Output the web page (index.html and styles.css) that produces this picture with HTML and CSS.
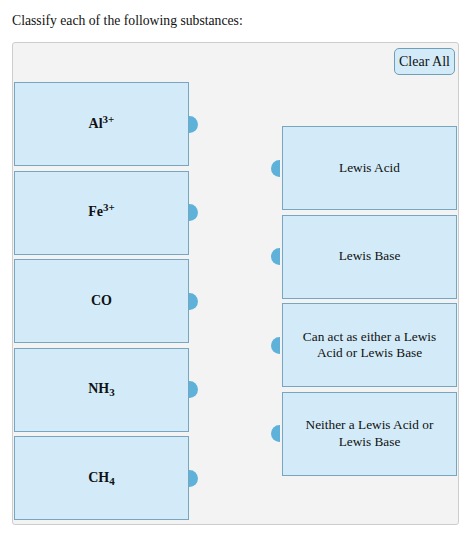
FILE: index.html
```html
<!DOCTYPE html>
<html>
<head>
<meta charset="utf-8">
<link rel="stylesheet" href="styles.css">
</head>
<body>
<p class="title">Classify each of the following substances:</p>
<div class="panel">
  <div class="toolbar"><button class="clear">Clear All</button></div>
  <div class="columns">
    <div class="col left">
      <div class="box src"><b>Al<sup>3+</sup></b></div>
      <div class="box src"><b>Fe<sup>3+</sup></b></div>
      <div class="box src"><b>CO</b></div>
      <div class="box src"><b>NH<sub>3</sub></b></div>
      <div class="box src"><b>CH<sub>4</sub></b></div>
    </div>
    <div class="col right">
      <div class="box dst">Lewis Acid</div>
      <div class="box dst">Lewis Base</div>
      <div class="box dst">Can act as either a Lewis Acid or Lewis Base</div>
      <div class="box dst">Neither a Lewis Acid or Lewis Base</div>
    </div>
  </div>
</div>
</body>
</html>
```
FILE: styles.css
```css
html, body {
  margin: 0;
  padding: 0;
  background: #ffffff;
  font-family: "Liberation Serif", "Times New Roman", serif;
  color: #111;
}
.title {
  margin: 0;
  padding: 12px 0 0 12px;
  font-size: 13.7px;
  line-height: 18px;
  height: 31px;
  box-sizing: border-box;
}
.panel {
  margin-left: 12px;
  width: 447px;
  height: 483px;
  box-sizing: border-box;
  border: 1px solid #cdcdcd;
  border-radius: 3px;
  background: #f3f3f3;
  margin-top: 11px;
}
.toolbar {
  display: flex;
  justify-content: flex-end;
  padding: 5px 3px 0 0;
}
.clear {
  font-family: "Liberation Serif", "Times New Roman", serif;
  font-size: 14px;
  color: #111;
  background: #d3ebf9;
  border: 1.5px solid #6f9fb7;
  border-radius: 5px;
  height: 27px;
  width: 61px;
  padding: 0;
  box-sizing: border-box;
}
.columns {
  display: flex;
  align-items: center;
  gap: 93px;
  padding: 7px 0 0 1px;
}
.col {
  display: flex;
  flex-direction: column;
  gap: 4.5px;
}
.box {
  position: relative;
  width: 175px;
  height: 84px;
  box-sizing: border-box;
  background: #d3ebf8;
  border: 1px solid #78a5bf;
  display: flex;
  align-items: center;
  justify-content: center;
  text-align: center;
  font-size: 13.3px;
  line-height: 16.7px;
  padding: 0 10px;
}
.src b {
  font-weight: bold;
  font-size: 14px;
}
.src sup, .src sub {
  font-size: 11px;
  line-height: 0;
}
.src sup {
  vertical-align: 5px;
}
.src sub {
  vertical-align: -3px;
}
.src::after, .dst::before {
  content: "";
  position: absolute;
  top: 50%;
  width: 9px;
  height: 17px;
  margin-top: -8.5px;
  background: #5eb2da;
}
.src::after {
  right: -10px;
  border-radius: 0 9px 9px 0;
}
.dst::before {
  left: -12px;
  border-radius: 9px 0 0 9px;
}
```
